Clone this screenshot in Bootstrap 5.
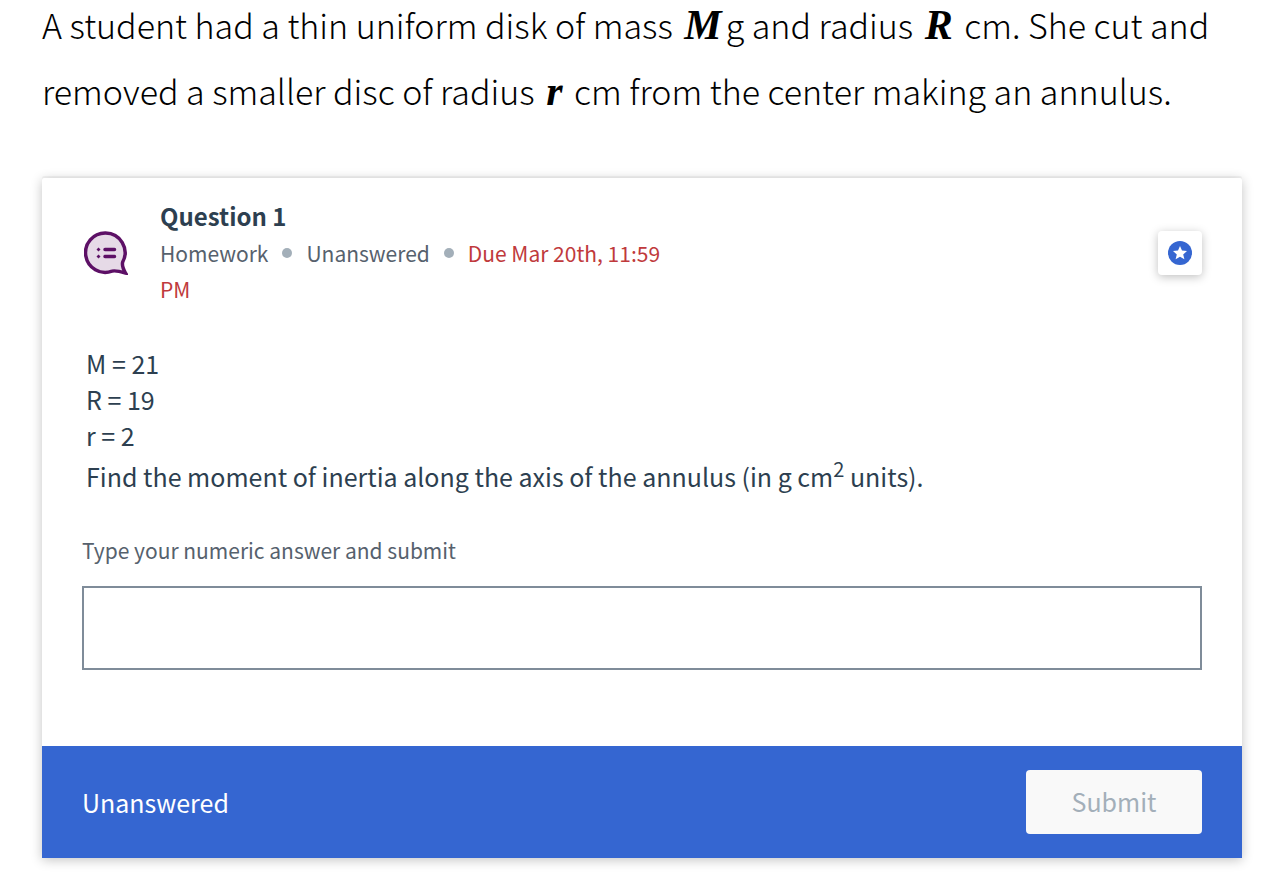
<!DOCTYPE html>
<html lang="en">
<head>
<meta charset="utf-8">
<meta name="viewport" content="width=device-width, initial-scale=1">
<title>Question 1</title>
<link href="https://cdn.jsdelivr.net/npm/bootstrap@5.3.0/dist/css/bootstrap.min.css" rel="stylesheet">
<style>
  body { font-family: "Noto Sans CJK JP", sans-serif; color: #2d3f50; font-size: 24px; line-height: 36px; background: #fff; }
  .page { padding: 0 30px 16px 42px; }
  .intro { font-weight: 300; font-size: 34px; line-height: 66px; color: #000; margin: -8px 0 54px; }
  .intro var { font-family: "Liberation Serif", serif; font-weight: 700; font-size: 42px; line-height: 1; padding: 0 4px; }
  .question { border: 0; border-radius: 2px 2px 0 0; box-shadow: 0 -2px 0 rgba(0, 0, 0, .04), 0 2px 12px rgba(0, 0, 0, .24); }
  .question-head { padding: 20px 40px 0 42px; }
  .question-title { font-size: 24px; line-height: 36px; font-weight: 700; margin-bottom: 1px; }
  .meta { font-size: 21px; max-width: 520px; color: #56616d; }
  .dot { display: inline-block; width: 10px; height: 10px; border-radius: 50%; background: #a3afb9; margin: 0 14px; vertical-align: 4px; }
  .due { color: #c03a3c; }
  .star-btn { width: 44px; height: 44px; border-radius: 4px; background: #fff; box-shadow: 0 2px 10px rgba(0, 0, 0, .25); }
  .prompt { font-size: 25px; padding: 38px 40px 0 44px; }
  .prompt sup { font-size: 20px; line-height: 0; top: -10px; vertical-align: baseline; }
  .find { padding-top: 5px; }
  .answer { padding: 38px 40px 76px; }
  .answer label { font-size: 21px; color: #56616d; margin-bottom: 18px; }
  .answer input { height: 84px; border: 2px solid #7f8c99; border-radius: 0; font-size: 25px; }
  .status-bar { background: #3566d1; color: #fff; padding: 24px 40px; font-size: 25px; }
  .submit { width: 176px; height: 64px; border: 0; border-radius: 4px; font-size: 25px; }
  .submit:disabled { background: #f9f9f9; color: #a3afb9; opacity: 1; }
</style>
</head>
<body>
<main class="page">
  <p class="intro">A student had a thin uniform disk of mass <var>M</var>g and radius <var>R</var> cm. She cut and removed a smaller disc of radius <var>r</var> cm from the center making an annulus.</p>

  <form class="card question">
    <header class="question-head d-flex align-items-center">
      <svg class="flex-shrink-0" width="44" height="44" viewBox="0 0 44 44" aria-hidden="true">
        <path d="M21.500 2A19.700 19.700 0 1 0 28 40.200Q31 39 41.500 42Q37.500 35 38.700 31A19.700 19.700 0 0 0 21.500 2Z" fill="#e6dae7" stroke="#5d1066" stroke-width="3.500" stroke-linejoin="miter"/>
        <path d="M21 18.500H30.500M21 25.500H30.500" stroke="#5d1066" stroke-width="3.500" stroke-linecap="round"/>
        <path d="M14.500 16.500l2 2-2 2-2-2zM14.500 23.500l2 2-2 2-2-2z" fill="#5d1066"/>
      </svg>
      <div class="flex-grow-1 ps-4 ms-2">
        <h1 class="question-title">Question 1</h1>
        <div class="meta">Homework<span class="dot"></span>Unanswered<span class="dot"></span><span class="due">Due Mar 20th, 11:59 PM</span></div>
      </div>
      <button type="button" class="btn star-btn p-0 border-0 d-flex align-items-center justify-content-center" aria-label="Bookmark question">
        <svg width="24" height="24" viewBox="0 0 24 24" aria-hidden="true">
          <circle cx="12" cy="12" r="12" fill="#3566d1"/>
          <path d="M12 5l2 4.600 5 .5-3.800 3.300 1.200 4.900L12 15.700l-4.400 2.600 1.200-4.900L5 10.100l5-.5z" fill="#fff"/>
        </svg>
      </button>
    </header>

    <div class="prompt">
      <div>M = 21</div>
      <div>R = 19</div>
      <div>r = 2</div>
      <div class="find">Find the moment of inertia along the axis of the annulus (in g cm<sup>2</sup> units).</div>
    </div>

    <div class="answer">
      <label for="answer" class="d-block">Type your numeric answer and submit</label>
      <input id="answer" type="text" inputmode="decimal" class="form-control">
    </div>

    <footer class="status-bar d-flex align-items-center justify-content-between">
      <span>Unanswered</span>
      <button type="submit" class="btn submit" disabled>Submit</button>
    </footer>
  </form>
</main>
<script src="https://cdn.jsdelivr.net/npm/bootstrap@5.3.0/dist/js/bootstrap.bundle.min.js"></script>
</body>
</html>
